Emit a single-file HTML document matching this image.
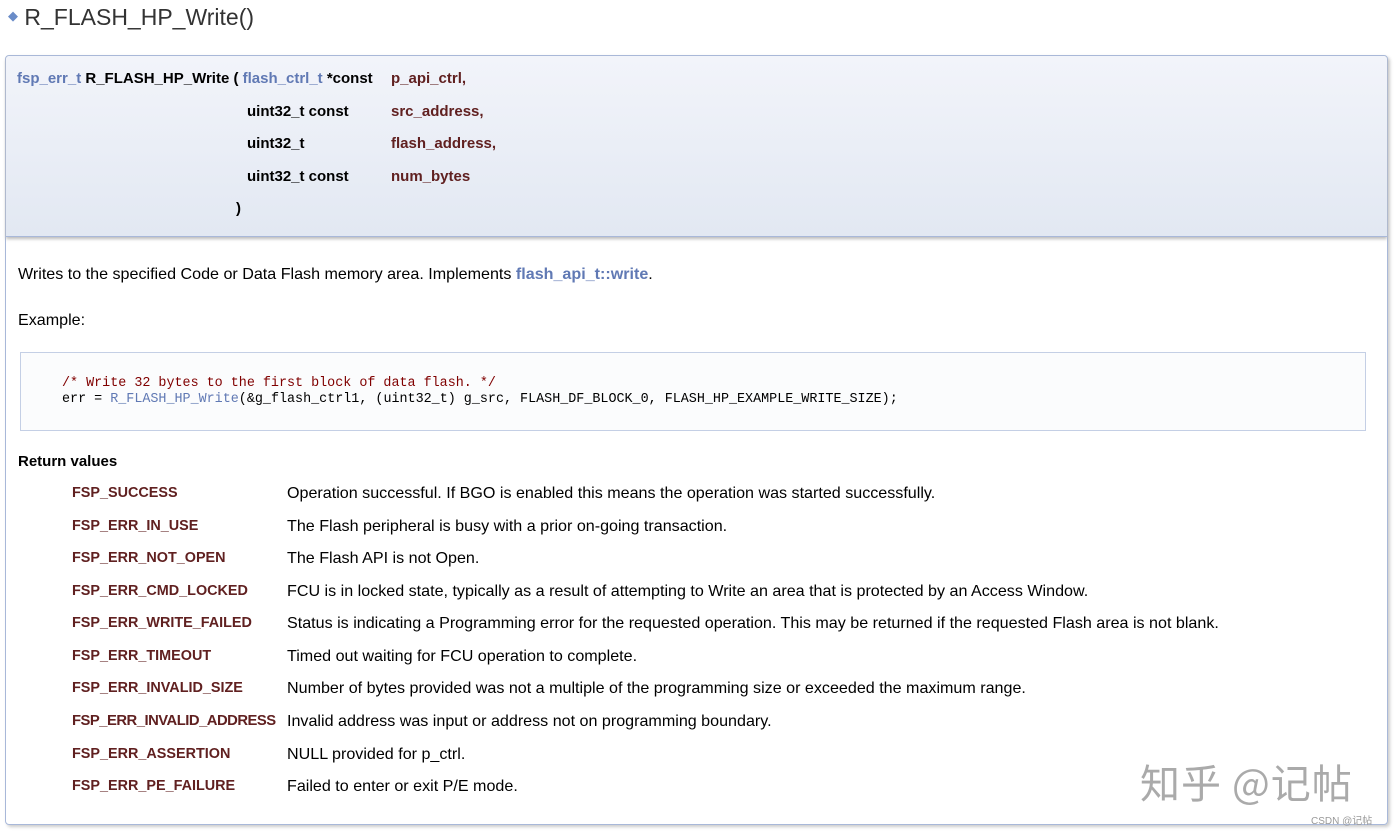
<!DOCTYPE html>
<html><head><meta charset="utf-8"><style>
body{margin:0;width:1394px;height:834px;background:#fff;font-family:"Liberation Sans",sans-serif;position:relative;overflow:hidden;color:#000}
.a{position:absolute;white-space:nowrap}
.title{left:8px;top:4px;font-size:23px;color:#333}
.box{position:absolute;left:5px;top:55px;width:1381px;height:768px;border:1px solid #a8b8d9;border-radius:4px;box-shadow:2px 2px 3px #ccc}
.hd{position:absolute;left:0;top:0;width:1381px;height:180px;background:linear-gradient(#f2f4fa,#e2e8f2);border-bottom:1px solid #a8b8d9;border-radius:4px 4px 0 0;box-shadow:0 2px 3px #bbb}
.sig{font-size:15px;font-weight:bold}
.lk{color:#6079b4}
.pn{color:#602020}
.t{font-size:16.1px}
.code{position:absolute;left:20px;top:352px;width:1344px;height:77px;border:1px solid #c4cfe5;background:#fbfcfd}
.mono{font-family:"Liberation Mono",monospace;font-size:13.4px}
.rv{font-size:14.4px;font-weight:bold;color:#602020;left:72px}
.rd{font-size:16.1px;left:287px}
</style></head><body>
<div class="a title"><span style="color:#6a8cc8;font-size:13px;vertical-align:5px">◆</span> R_FLASH_HP_Write()</div>
<div class="box"><div class="hd"></div></div>
<div class="a sig" style="left:17px;top:70px"><span class="lk">fsp_err_t</span> R_FLASH_HP_Write ( <span class="lk">flash_ctrl_t</span> *const</div>
<div class="a sig pn" style="left:391px;top:70px">p_api_ctrl,</div>
<div class="a sig" style="left:247px;top:103px">uint32_t const</div>
<div class="a sig pn" style="left:391px;top:103px">src_address,</div>
<div class="a sig" style="left:247px;top:135px">uint32_t</div>
<div class="a sig pn" style="left:391px;top:135px">flash_address,</div>
<div class="a sig" style="left:247px;top:168px">uint32_t const</div>
<div class="a sig pn" style="left:391px;top:168px">num_bytes</div>
<div class="a sig" style="left:236px;top:200px">)</div>
<div class="a t" style="left:18px;top:265px">Writes to the specified Code or Data Flash memory area. Implements <b class="lk">flash_api_t::write</b>.</div>
<div class="a t" style="left:18px;top:311px">Example:</div>
<div class="code"></div>
<div class="a mono" style="left:62px;top:376px;color:#800000">/* Write 32 bytes to the first block of data flash. */</div>
<div class="a mono" style="left:62px;top:392px">err = <span class="lk">R_FLASH_HP_Write</span>(&amp;g_flash_ctrl1, (uint32_t) g_src, FLASH_DF_BLOCK_0, FLASH_HP_EXAMPLE_WRITE_SIZE);</div>
<div class="a" style="left:18px;top:453px;font-size:15px;font-weight:bold">Return values</div>
<div class="a rv" style="top:485px">FSP_SUCCESS</div><div class="a rd" style="top:484px">Operation successful. If BGO is enabled this means the operation was started successfully.</div>
<div class="a rv" style="top:518px">FSP_ERR_IN_USE</div><div class="a rd" style="top:517px">The Flash peripheral is busy with a prior on-going transaction.</div>
<div class="a rv" style="top:550px">FSP_ERR_NOT_OPEN</div><div class="a rd" style="top:549px">The Flash API is not Open.</div>
<div class="a rv" style="top:583px">FSP_ERR_CMD_LOCKED</div><div class="a rd" style="top:582px">FCU is in locked state, typically as a result of attempting to Write an area that is protected by an Access Window.</div>
<div class="a rv" style="top:615px">FSP_ERR_WRITE_FAILED</div><div class="a rd" style="top:614px">Status is indicating a Programming error for the requested operation. This may be returned if the requested Flash area is not blank.</div>
<div class="a rv" style="top:648px">FSP_ERR_TIMEOUT</div><div class="a rd" style="top:647px">Timed out waiting for FCU operation to complete.</div>
<div class="a rv" style="top:680px">FSP_ERR_INVALID_SIZE</div><div class="a rd" style="top:679px">Number of bytes provided was not a multiple of the programming size or exceeded the maximum range.</div>
<div class="a rv" style="top:713px;letter-spacing:-0.5px;font-size:14.8px">FSP_ERR_INVALID_ADDRESS</div><div class="a rd" style="top:712px">Invalid address was input or address not on programming boundary.</div>
<div class="a rv" style="top:746px">FSP_ERR_ASSERTION</div><div class="a rd" style="top:745px">NULL provided for p_ctrl.</div>
<div class="a rv" style="top:778px">FSP_ERR_PE_FAILURE</div><div class="a rd" style="top:777px">Failed to enter or exit P/E mode.</div>
<div class="a" style="left:1140px;top:752px;font-size:40px;letter-spacing:1px;color:#aaa;font-family:'Noto Sans CJK SC',sans-serif">知乎 @记帖</div>
<div class="a" style="left:1311px;top:812px;font-size:10px;color:#999;font-family:'Liberation Sans','Noto Sans CJK SC',sans-serif">CSDN @记帖</div>
</body></html>
